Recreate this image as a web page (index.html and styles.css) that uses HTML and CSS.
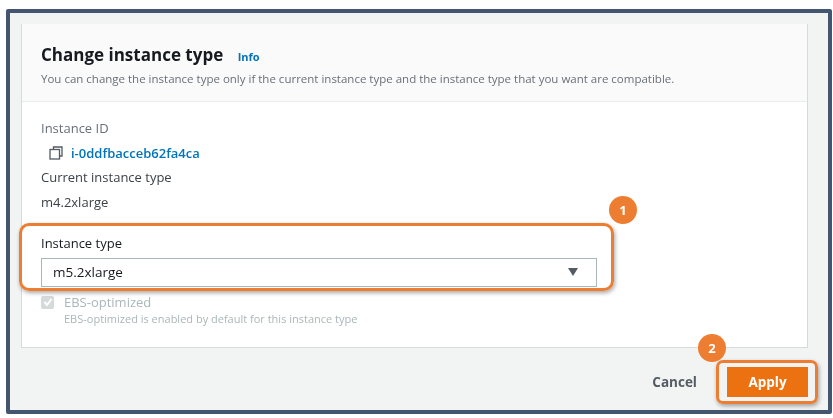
FILE: index.html
```html
<!DOCTYPE html>
<html>
  <head>
    <meta http-equiv="Content-Type" content="text/html; charset=UTF-8" />
    <title>Change instance type</title>
    <link rel="stylesheet" href="styles.css">
  </head>

  <body>
    <div class="frame">
      <div class="card">
        <div class="card-header">
          <h2>Change instance type <a class="info-link">Info</a></h2>
          <p>You can change the instance type only if the current instance type and the instance type that you want are compatible.</p>
        </div>
        <div class="card-body">
          <div class="label muted">Instance ID</div>
          <div class="instance-id">
            <svg class="copy-icon" width="14" height="14" viewBox="0 0 14 14">
              <path d="M4.5 3V1h8.5v9h-2.500" />
              <rect x="1" y="3.500" width="9.500" height="9.500" />
            </svg>
            <a class="id-link">i-0ddfbacceb62fa4ca</a>
          </div>
          <div class="label">Current instance type</div>
          <div class="label value">m4.2xlarge</div>
          <div class="label type-label">Instance type</div>
          <div class="select-box">
            <span>m5.2xlarge</span>
            <span class="caret"></span>
          </div>
          <div class="check-row">
            <span class="checkbox">
              <svg width="12" height="12" viewBox="0 0 12 12">
                <path d="M2.500 6l2.500 3 4.500-6" />
              </svg>
            </span>
            <div>
              <div class="check-title">EBS-optimized</div>
              <div class="check-note">EBS-optimized is enabled by default for this instance type</div>
            </div>
          </div>
        </div>
      </div>
      <div class="actions">
        <a class="cancel">Cancel</a>
        <button class="apply">Apply</button>
      </div>

      <!-- callouts on top of the form -->
      <div class="callout callout-type"></div>
      <div class="callout callout-apply"></div>
      <div class="step step-one">1</div>
      <div class="step step-two">2</div>
    </div>
  </body>
</html>
```

FILE: styles.css
```css
html,
body {
  margin: 0;
  height: 100%;
  background-color: white;
  overflow: hidden;
}

body {
  padding: 9px 1px 0 6px;
  box-sizing: border-box;
  font-family: "Open Sans", "Noto Sans", sans-serif;
  color: #16191f;
}

.frame {
  position: relative;
  box-sizing: border-box;
  height: 405px;
  border: 4px solid #44566f;
  border-radius: 2px;
  background-color: #f2f3f3;
  padding: 11px 20px 0 11px;
  filter: blur(0.35px);
}

.card {
  height: 324px;
  box-sizing: border-box;
  background-color: white;
  border: 1px solid #d5dbdb;
  border-top: none;
}

.card-header {
  box-sizing: border-box;
  height: 78px;
  padding: 19px 19px 0 19px;
  background-color: #fafafa;
  border-bottom: 1px solid #eaeded;
}

h2 {
  margin: 0;
  font-size: 17px;
  line-height: 23px;
  font-weight: 700;
}

.info-link {
  margin-left: 10px;
  font-size: 11px;
  font-weight: 700;
  color: #0073bb;
}

.card-header p {
  margin: 3px 0 0 0;
  font-size: 11.5px;
  line-height: 16px;
  color: #687078;
}

.card-body {
  padding: 14px 19px 0 19px;
}

.label {
  font-size: 13px;
  line-height: 24.500px;
  color: #3b4248;
}

.muted {
  color: #687078;
}

.instance-id {
  display: flex;
  align-items: center;
  gap: 8px;
  height: 24.500px;
  padding-left: 8px;
}

.copy-icon {
  fill: none;
  stroke: #545b64;
  stroke-width: 1.300;
}

.id-link {
  font-size: 13px;
  font-weight: 600;
  color: #0073bb;
}

.type-label {
  margin-top: 17px;
  color: #16191f;
}

.select-box {
  display: flex;
  justify-content: space-between;
  align-items: center;
  box-sizing: border-box;
  width: 556px;
  height: 29px;
  margin-top: 2px;
  padding: 0 18px 0 11px;
  background-color: white;
  border: 1px solid #aab7b8;
  font-size: 13.500px;
}

.caret {
  width: 0;
  height: 0;
  border-left: 5.500px solid transparent;
  border-right: 5.500px solid transparent;
  border-top: 8px solid #545b64;
}

.check-row {
  display: flex;
  gap: 10px;
  margin-top: 6px;
}

.checkbox {
  display: flex;
  align-items: center;
  justify-content: center;
  width: 13px;
  height: 13px;
  margin-top: 3px;
  border-radius: 2px;
  background-color: #d5dbdb;
}

.checkbox path {
  fill: none;
  stroke: white;
  stroke-width: 2;
}

.check-title {
  font-size: 13px;
  line-height: 18px;
  color: #aab7b8;
}

.check-note {
  font-size: 11px;
  line-height: 16px;
  color: #aab7b8;
}

.actions {
  display: flex;
  justify-content: flex-end;
  align-items: center;
  gap: 30px;
  margin-top: 19px;
}

.cancel {
  font-size: 13.500px;
  font-weight: 700;
  color: #545b64;
}

.apply {
  width: 81px;
  height: 30px;
  border: none;
  background-color: #ec7211;
  color: white;
  font-family: "Open Sans", "Noto Sans", sans-serif;
  font-size: 13.500px;
  font-weight: 700;
}

.callout {
  position: absolute;
  box-sizing: border-box;
  border: 3px solid #ed7d31;
  border-radius: 10px;
  box-shadow: 1px 2px 4px rgba(0, 0, 0, 0.35);
}

.callout-type {
  left: 9px;
  top: 210px;
  width: 595px;
  height: 68px;
}

.callout-apply {
  left: 706px;
  top: 347px;
  width: 102px;
  height: 44px;
  border-radius: 7px;
}

.step {
  position: absolute;
  width: 28px;
  height: 28px;
  border-radius: 50%;
  background-color: #ed7d31;
  color: white;
  font-size: 13px;
  font-weight: 700;
  line-height: 28px;
  text-align: center;
}

.step-one {
  left: 599px;
  top: 183px;
}

.step-two {
  left: 688px;
  top: 321px;
}
```
